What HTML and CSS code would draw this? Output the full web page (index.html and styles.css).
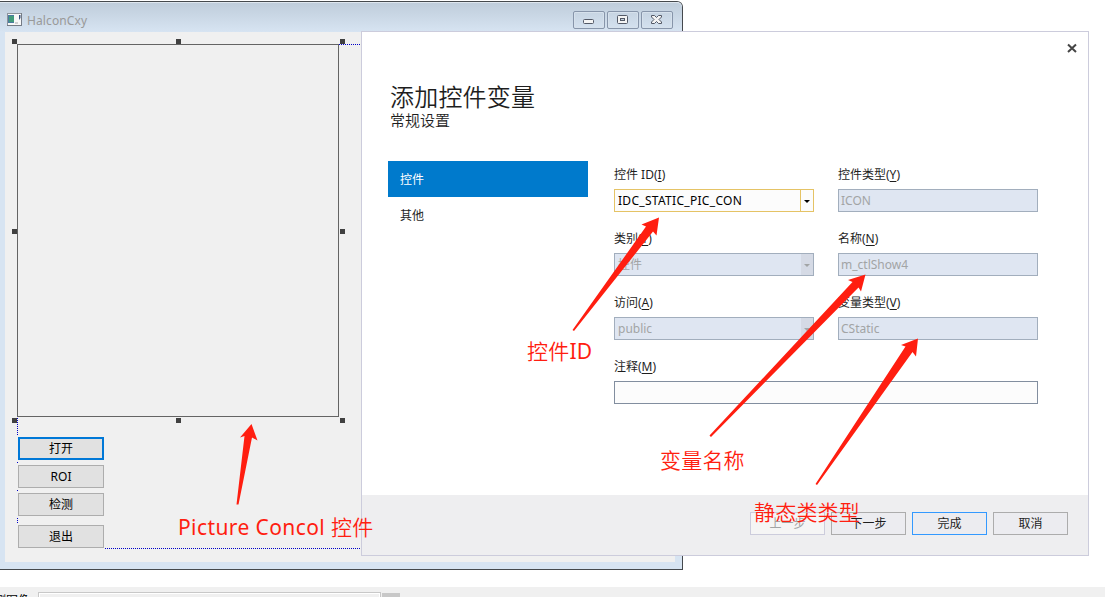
FILE: index.html
```html
<!DOCTYPE html>
<html lang="zh-CN">

<head>
    <meta charset="UTF-8">
    <meta name="viewport" content="width=device-width, initial-scale=1.0">
    <title>HalconCxy</title>
    <link rel="stylesheet" href="styles.css">
</head>

<body>

<!-- Dialog editor window -->
<div class="window">
    <header class="titlebar">
        <svg class="app-icon" width="16" height="14" viewBox="0 0 16 14">
            <rect x="0.5" y="0.5" width="14" height="12" fill="#f8f8f8" stroke="#8d939b"/>
            <path d="M14.5 0v12.500H0" fill="none" stroke="#747b85"/>
            <rect x="1" y="2" width="6" height="8" fill="#4a7aa0"/>
            <rect x="2" y="3" width="5" height="6" fill="#439b7b"/>
            <path d="M12 2h1.500v3L12 7z" fill="#37527c"/>
            <rect x="8" y="9" width="3" height="2" fill="#d0d0d0"/>
        </svg>
        <span class="window-title">HalconCxy</span>
        <div class="window-buttons">
            <span><svg width="12" height="12"><rect x="0.5" y="5.5" width="10" height="4" rx="1" fill="#f4f4f4" stroke="#535966"/></svg></span>
            <span><svg width="12" height="12"><rect x="0.5" y="1.5" width="10" height="8" rx="1" fill="#f4f4f4" stroke="#535966"/><rect x="3.5" y="4.5" width="4" height="2" fill="#c4d0dd" stroke="#535966"/></svg></span>
            <span><svg width="12" height="12"><path d="M0.500 1.500h3l2 2 2-2h3v1.500L8 5.500l2.500 2.500v1.500h-3l-2-2-2 2h-3V8L3 5.500.500 3z" fill="#f4f4f4" stroke="#535966"/></svg></span>
        </div>
    </header>
    <div class="client">
        <div class="picture">
            <i class="handle top left"></i>
            <i class="handle top center"></i>
            <i class="handle top right"></i>
            <i class="handle middle left"></i>
            <i class="handle middle right"></i>
            <i class="handle bottom left"></i>
            <i class="handle bottom center"></i>
            <i class="handle bottom right"></i>
        </div>
        <div class="commands">
            <button class="default">打开</button>
            <button>ROI</button>
            <button>检测</button>
            <button class="exit">退出</button>
        </div>
        <!-- snap lines -->
        <svg class="guides" width="670" height="530">
            <path d="M334 12.500H356M12.500 386V403M12.500 430v1M12.500 458v1M12.500 486v5M100 516.500H356"/>
        </svg>
    </div>
</div>

<!-- Add control variable wizard -->
<div class="dialog">
    <div class="dialog-close">
        <svg width="10" height="10"><path d="M1 1.500l8 7.500M9 1.500L1 9" stroke="#454545" stroke-width="2"/></svg>
    </div>
    <h1>添加控件变量</h1>
    <p class="subtitle">常规设置</p>
    <div class="dialog-body">
        <nav>
            <div class="active">控件</div>
            <div>其他</div>
        </nav>
        <div class="form">
            <div class="field">
                <label>控件 ID(<u>I</u>)</label>
                <div class="box combo focus"><span class="id-text">IDC_STATIC_PIC_CON</span><b></b></div>
            </div>
            <div class="field">
                <label>控件类型(<u>Y</u>)</label>
                <div class="box disabled">ICON</div>
            </div>
            <div class="field">
                <label>类别(<u>T</u>)</label>
                <div class="box combo disabled"><span>控件</span><b></b></div>
            </div>
            <div class="field">
                <label>名称(<u>N</u>)</label>
                <div class="box disabled">m_ctlShow4</div>
            </div>
            <div class="field">
                <label>访问(<u>A</u>)</label>
                <div class="box combo disabled"><span>public</span><b></b></div>
            </div>
            <div class="field">
                <label>变量类型(<u>V</u>)</label>
                <div class="box disabled">CStatic</div>
            </div>
            <div class="field wide">
                <label>注释(<u>M</u>)</label>
                <div class="box"></div>
            </div>
        </div>
    </div>
    <footer>
        <button class="off">上一步</button>
        <button>下一步</button>
        <button class="primary">完成</button>
        <button>取消</button>
    </footer>
</div>

<!-- Top of the next form -->
<div class="strip">
    <span>测图像</span>
    <div class="strip-input"></div>
    <div class="strip-button"></div>
</div>

<!-- Red notes -->
<svg class="arrows" width="1105" height="597">
    <path d="M236.500 504.500L244.500 436L240 437.500L251.500 424L257.500 440.500L252 437.500L238.500 504.500z"/>
    <path d="M572.500 330L646 226.500L641.500 224.500L659 217.500L656.500 235.500L653 231.500L574 331z"/>
    <path d="M709.500 435.500L852.500 282L848 280L865.500 274.500L861 291.500L858.500 287.500L711 437z"/>
    <path d="M815.500 484L905.500 346.500L901 345L918 338.500L916 356.500L912.500 352L817 485z"/>
</svg>
<div class="note note-picture"><span>Picture Concol</span> 控件</div>
<div class="note note-id">控件<span>ID</span></div>
<div class="note note-name">变量名称</div>
<div class="note note-type">静态类类型</div>

</body>
</html>
```
FILE: styles.css
```css
body {
    font-family: "Noto Sans", "Noto Sans CJK SC", sans-serif;
    font-size: 12px;
    line-height: 16px;
    margin: 0;
    width: 1105px;
    height: 597px;
    position: relative;
    overflow: hidden;
    background: #fff;
    color: #1e1e1e;
}

button {
    box-sizing: border-box;
    font: inherit;
    padding: 0;
    color: #000;
}

/* editor window */
.window {
    position: absolute;
    left: 0;
    top: 1px;
    width: 683px;
    height: 569px;
    box-sizing: border-box;
    border: 1px solid #45494d;
    border-left: 0;
    border-top-right-radius: 6px;
    background: #d7e4f2;
    padding: 0 7px 7px 5px;
}

.titlebar {
    display: flex;
    align-items: center;
    height: 30px;
    box-sizing: border-box;
    margin: 0 -7px 0 -5px;
    padding: 5px 9px 0 7px;
    border-top: 1px solid #dfe7ef;
    border-top-right-radius: 5px;
    background: linear-gradient(#bfcddb, #d7e4f2);
}

.window-title {
    margin: 1px 0 0 4px;
    color: #999;
    font-size: 12px;
    letter-spacing: 0.1px;
}

.window-buttons {
    display: flex;
    gap: 2px;
    margin-left: auto;
}

.window-buttons span {
    display: flex;
    justify-content: center;
    align-items: center;
    width: 30px;
    height: 16px;
    border: 1px solid #8795aa;
    border-radius: 2px;
    box-shadow: inset 0 0 0 1px #d6e1ec;
}

.client {
    position: relative;
    height: 530px;
    box-sizing: border-box;
    padding: 12px 0 0 12px;
    background: #f0f0f0;
}

.picture {
    position: relative;
    width: 320px;
    height: 371px;
    border: 1px solid #646464;
}

.handle {
    position: absolute;
    width: 5px;
    height: 5px;
    background: #404040;
}

.top { top: -6px; }
.middle { top: 184px; }
.bottom { bottom: -7px; }
.left { left: -6px; }
.center { left: 158px; }
.right { right: -7px; }

.commands {
    display: flex;
    flex-direction: column;
    gap: 5px;
    width: 86px;
    margin: 20px 0 0 1px;
}

.commands button {
    height: 23px;
    border: 1px solid #adadad;
    background: #e1e1e1;
}

.commands .default {
    border: 2px solid #0078d7;
}

.commands .exit {
    margin-top: 4px;
}

.guides {
    position: absolute;
    left: 0;
    top: 0;
}

.guides path {
    stroke: #0000c8;
    stroke-dasharray: 1 1;
}

/* wizard */
.dialog {
    position: absolute;
    left: 361px;
    top: 31px;
    width: 728px;
    height: 525px;
    box-sizing: border-box;
    border: 1px solid #ccccdc;
    background: #fff;
    display: flex;
    flex-direction: column;
}

.dialog-close {
    display: flex;
    justify-content: flex-end;
    height: 36px;
    box-sizing: border-box;
    padding: 11px 11px 0 0;
}

.dialog h1 {
    margin: 12px 0 0 28px;
    font-size: 24px;
    line-height: 33px;
    font-weight: 350;
    letter-spacing: 0.2px;
}

.subtitle {
    margin: -1px 0 0 28px;
    font-size: 15px;
    line-height: 16px;
    font-weight: 350;
}

.dialog-body {
    display: flex;
    gap: 26px;
    margin: 33px 0 0 26px;
}

nav {
    width: 200px;
}

nav div {
    height: 36px;
    line-height: 37px;
    padding-left: 12px;
}

nav .active {
    background: #007acc;
    color: #fff;
}

.form {
    display: grid;
    grid-template-columns: 200px 200px;
    grid-auto-rows: 64px;
    column-gap: 24px;
    padding-top: 5px;
}

.wide {
    grid-column: span 2;
}

.field label {
    display: block;
    height: 23px;
    line-height: 17px;
}

.field u {
    text-underline-offset: 2px;
}

.box {
    height: 23px;
    box-sizing: border-box;
    border: 1px solid #828e9f;
    background: #fcfcfc;
    padding-left: 2px;
    line-height: 21px;
}

.disabled {
    border-color: #a2aebd;
    background: #dfe6f2;
    color: #a2a4a5;
}

.combo {
    display: flex;
    justify-content: space-between;
    padding-left: 3px;
}

.id-text {
    letter-spacing: 0.3px;
}

.combo b {
    display: flex;
    justify-content: center;
    align-items: center;
    width: 12px;
}

.combo b::after {
    content: "";
    margin-top: 2px;
    border: 3px solid transparent;
    border-top-color: currentColor;
    border-bottom: 0;
}

.disabled b {
    background: #d5dae5;
}

.focus {
    border-color: #e5c365;
    color: #000;
}

.focus b {
    border-left: 1px solid #e5c365;
}

.dialog footer {
    display: flex;
    justify-content: flex-end;
    gap: 6px;
    height: 60px;
    box-sizing: border-box;
    margin-top: auto;
    padding: 17px 20px 0 0;
    background: #eeeef0;
}

.dialog footer button {
    width: 75px;
    height: 23px;
    border: 1px solid #acacac;
    background: #ececf0;
    color: #1e1e1e;
}

.dialog footer .primary {
    border-color: #3399ff;
}

.dialog footer .off {
    border-color: #ccccdc;
    background: #f5f5f5;
    color: #a2a4a5;
}

/* form below */
.strip {
    position: absolute;
    left: 0;
    right: 0;
    bottom: 0;
    height: 10px;
    overflow: hidden;
    display: flex;
    background: #f0f0f0;
    color: #000;
}

.strip span {
    width: 44px;
    margin: 6px 0 0 -6px;
    white-space: nowrap;
}

.strip-input {
    width: 341px;
    height: 20px;
    margin-top: 5px;
    border: 1px solid #c8c8c8;
    box-shadow: inset 0 0 0 1px #fff;
}

.strip-button {
    width: 18px;
    height: 20px;
    margin: 6px 0 0 1px;
    background: #c8c8c8;
}

/* notes */
.arrows {
    position: absolute;
    left: 0;
    top: 0;
    fill: #ff1e10;
}

.note {
    position: absolute;
    color: #ff1e10;
    font-size: 21px;
    font-weight: 350;
    line-height: 28px;
    letter-spacing: 0.2px;
    white-space: nowrap;
}

.note span {
    font-weight: 400;
}

.note-picture {
    left: 178px;
    top: 513px;
    letter-spacing: 0.4px;
}

.note-id { left: 527px; top: 337px; }
.note-name { left: 660px; top: 446px; }
.note-type { left: 754px; top: 498px; }
```
